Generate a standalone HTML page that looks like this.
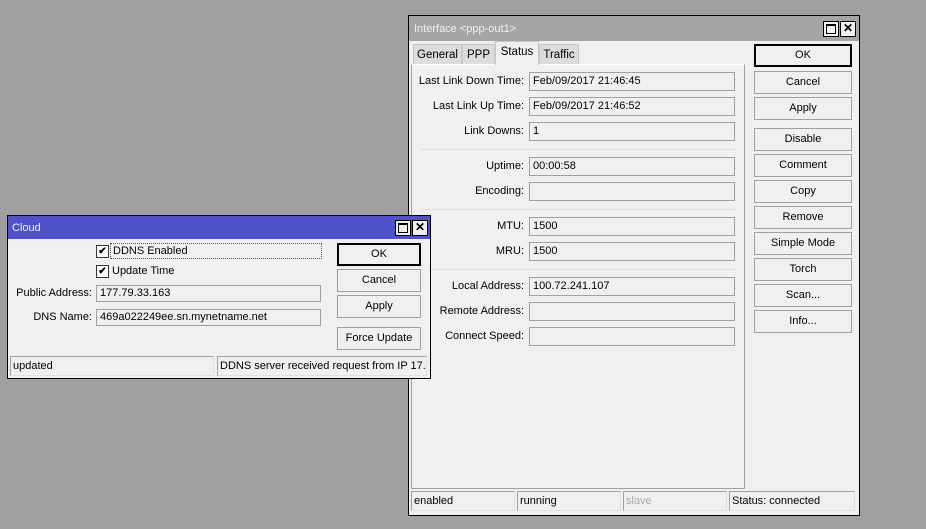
<!DOCTYPE html>
<html><head><style>
*{box-sizing:border-box;margin:0;padding:0}
body{width:926px;height:529px;background:#a0a0a0;position:relative;overflow:hidden;font-family:"Liberation Sans",sans-serif;font-size:11px;color:#000}
div{position:absolute}
.win{background:#f0f0f0;border:1px solid #000}
.inp{background:#f0f0f0;border:1px solid #a0a0a0;height:19px;padding-left:3px;line-height:17px;white-space:nowrap;overflow:hidden}
.lbl{text-align:right;line-height:19px;height:19px;white-space:nowrap}
.btn{border:1px solid #a0a0a0;background:#f0f0f0;text-align:center;height:23px;line-height:21px}
.btn.def{border:2px solid #000;line-height:19px}
.sep{height:1px;background:#dcdcdc}
.tb{width:16px;height:16px;border:1px solid #000;background:#f0f0f0}
.cb{width:13px;height:13px;border:1px solid #333;background:#fff}
.tab{border:1px solid #c8c8c8;border-bottom:none;background:#dcdcdc;height:21px;line-height:20px;text-align:center;font-size:11.5px}
.sc{border:1px solid #a0a0a0;border-right-color:#e0e0e0;border-bottom-color:#e0e0e0;height:20px;line-height:18px;padding-left:2px;white-space:nowrap;overflow:hidden}
</style></head><body>

<div class="win" style="left:408px;top:15px;width:452px;height:501px">
  <div style="left:0;top:0;width:450px;height:25px;background:#a5a5a5;color:#f0f0f0;line-height:26px;padding-left:5px">Interface &lt;ppp-out1&gt;</div>
  <div class="tb" style="left:414px;top:5px"><div style="left:2px;top:2px;width:10px;height:10px;border:1px solid #000;border-top-width:2px"></div></div>
  <div class="tb" style="left:431px;top:5px;text-align:center;line-height:13px;font-weight:bold;font-size:12px">✕</div>
  <div class="tab" style="left:4px;top:28px;width:49px">General</div>
  <div class="tab" style="left:53px;top:28px;width:33px">PPP</div>
  <div class="tab" style="left:86px;top:25px;width:44px;height:24px;background:#f0f0f0;line-height:20px;z-index:2">Status</div>
  <div class="tab" style="left:130px;top:28px;width:40px">Traffic</div>
  <div style="left:2px;top:48px;width:334px;height:425px;border:1px solid #a0a0a0;border-top-color:#fff"></div>

  <div class="lbl" style="left:0;top:56px;width:115px">Last Link Down Time:</div><div class="inp" style="left:120px;top:56px;width:206px">Feb/09/2017 21:46:45</div>
  <div class="lbl" style="left:0;top:81px;width:115px">Last Link Up Time:</div><div class="inp" style="left:120px;top:81px;width:206px">Feb/09/2017 21:46:52</div>
  <div class="lbl" style="left:0;top:106px;width:115px">Link Downs:</div><div class="inp" style="left:120px;top:106px;width:206px">1</div>
  <div class="sep" style="left:12px;top:133px;width:314px"></div>
  <div class="lbl" style="left:0;top:141px;width:115px">Uptime:</div><div class="inp" style="left:120px;top:141px;width:206px">00:00:58</div>
  <div class="lbl" style="left:0;top:166px;width:115px">Encoding:</div><div class="inp" style="left:120px;top:166px;width:206px"></div>
  <div class="sep" style="left:12px;top:193px;width:314px"></div>
  <div class="lbl" style="left:0;top:201px;width:115px">MTU:</div><div class="inp" style="left:120px;top:201px;width:206px">1500</div>
  <div class="lbl" style="left:0;top:226px;width:115px">MRU:</div><div class="inp" style="left:120px;top:226px;width:206px">1500</div>
  <div class="sep" style="left:12px;top:253px;width:314px"></div>
  <div class="lbl" style="left:0;top:261px;width:115px">Local Address:</div><div class="inp" style="left:120px;top:261px;width:206px">100.72.241.107</div>
  <div class="lbl" style="left:0;top:286px;width:115px">Remote Address:</div><div class="inp" style="left:120px;top:286px;width:206px"></div>
  <div class="lbl" style="left:0;top:311px;width:115px">Connect Speed:</div><div class="inp" style="left:120px;top:311px;width:206px"></div>

  <div class="btn def" style="left:345px;top:28px;width:98px">OK</div>
  <div class="btn" style="left:345px;top:55px;width:98px">Cancel</div>
  <div class="btn" style="left:345px;top:81px;width:98px">Apply</div>
  <div class="btn" style="left:345px;top:112px;width:98px">Disable</div>
  <div class="btn" style="left:345px;top:138px;width:98px">Comment</div>
  <div class="btn" style="left:345px;top:164px;width:98px">Copy</div>
  <div class="btn" style="left:345px;top:190px;width:98px">Remove</div>
  <div class="btn" style="left:345px;top:216px;width:98px">Simple Mode</div>
  <div class="btn" style="left:345px;top:242px;width:98px">Torch</div>
  <div class="btn" style="left:345px;top:268px;width:98px">Scan...</div>
  <div class="btn" style="left:345px;top:294px;width:98px">Info...</div>

  <div class="sc" style="left:2px;top:475px;width:104px">enabled</div>
  <div class="sc" style="left:108px;top:475px;width:104px">running</div>
  <div class="sc" style="left:214px;top:475px;width:104px;color:#a8a8a8">slave</div>
  <div class="sc" style="left:320px;top:475px;width:126px">Status: connected</div>
</div>

<div class="win" style="left:7px;top:215px;width:424px;height:164px">
  <div style="left:0;top:0;width:422px;height:23px;background:#4f52c8;color:#f0f0f0;line-height:24px;padding-left:4px">Cloud</div>
  <div class="tb" style="left:387px;top:4px"><div style="left:2px;top:2px;width:10px;height:10px;border:1px solid #000;border-top-width:2px"></div></div>
  <div class="tb" style="left:404px;top:4px;text-align:center;line-height:13px;font-weight:bold;font-size:12px">✕</div>

  <div class="cb" style="left:88px;top:29px;font-size:10px;line-height:11px;text-align:center;font-weight:bold">✔</div>
  <div style="left:102px;top:27px;width:212px;height:16px;border:1px dotted #555;line-height:14px;padding-left:2px">DDNS Enabled</div>
  <div class="cb" style="left:88px;top:49px;font-size:10px;line-height:11px;text-align:center;font-weight:bold">✔</div>
  <div style="left:104px;top:48px;line-height:14px">Update Time</div>

  <div class="lbl" style="left:0;top:69px;width:84px;height:17px;line-height:17px">Public Address:</div><div class="inp" style="left:88px;top:69px;width:225px;height:17px;line-height:15px">177.79.33.163</div>
  <div class="lbl" style="left:0;top:93px;width:84px;height:17px;line-height:17px">DNS Name:</div><div class="inp" style="left:88px;top:93px;width:225px;height:17px;line-height:15px">469a022249ee.sn.mynetname.net</div>

  <div class="btn def" style="left:329px;top:27px;width:84px">OK</div>
  <div class="btn" style="left:329px;top:53px;width:84px">Cancel</div>
  <div class="btn" style="left:329px;top:79px;width:84px">Apply</div>
  <div class="btn" style="left:329px;top:111px;width:84px">Force Update</div>

  <div class="sc" style="left:2px;top:140px;width:204px">updated</div>
  <div class="sc" style="left:209px;top:140px;width:210px">DDNS server received request from IP 17...</div>
</div>
</body></html>
